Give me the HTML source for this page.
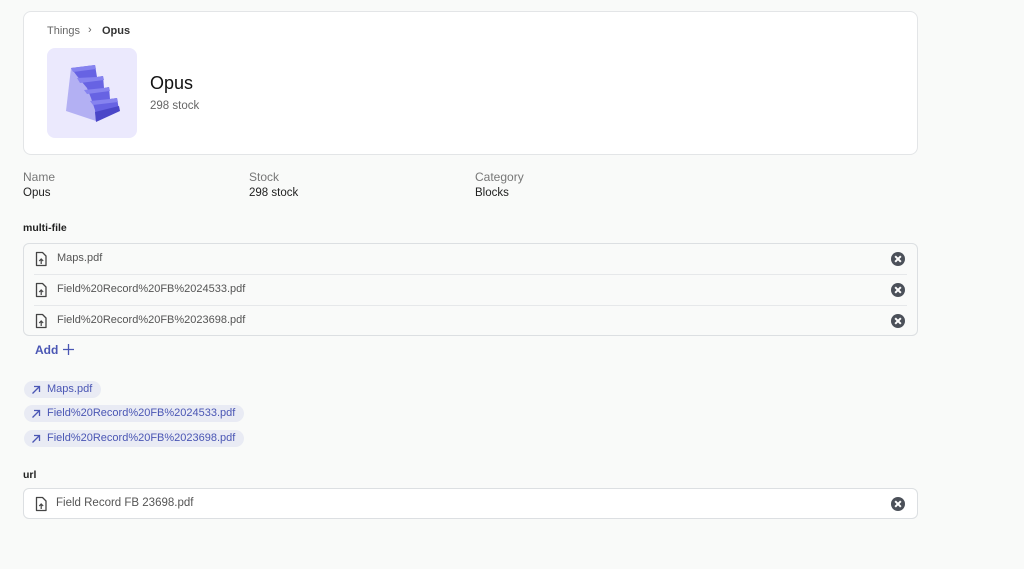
<!DOCTYPE html>
<html><head><style>
*{margin:0;padding:0;box-sizing:border-box}
body{width:1024px;height:569px;background:#f9faf9;font-family:"Liberation Sans",sans-serif;position:relative;overflow:hidden;color:#222}
.a{position:absolute;white-space:nowrap}
.card{position:absolute;left:23px;top:11px;width:895px;height:144px;background:#fff;border:1px solid #e3e5e7;border-radius:8px}
.box{position:absolute;left:23px;width:895px;background:#f9faf9;border:1px solid #dcdfe2;border-radius:6px}
.row{position:absolute;left:10px;right:10px;height:31px}
.row .t{position:absolute;left:23px;top:8px;font-size:11px;color:#555}
.fi{position:absolute;left:0;top:7px}
.x{position:absolute;right:2px;top:8px;width:14px;height:14px;border-radius:50%;background:#4b5059}
.x:before,.x:after{content:"";position:absolute;left:6px;top:3px;width:2px;height:8px;background:#fff;transform:rotate(45deg)}
.x:after{transform:rotate(-45deg)}
.chip{position:absolute;left:24px;height:17px;border-radius:9px;background:#e9ebf4;color:#4a56b4;font-size:11px;padding:2px 9px 0 23px}
.chip svg{position:absolute;left:7px;top:4px}
.lbl{font-size:12px;color:#777}
.val{font-size:11.5px;color:#222}
</style></head><body>
<div class="card">
 <div class="a" style="left:23px;top:13px;font-size:11px;color:#666">Things</div>
 <div class="a" style="left:64px;top:12px;font-size:11px;color:#666">›</div>
 <div class="a" style="left:78px;top:13px;font-size:11px;font-weight:bold;color:#333">Opus</div>
 <div class="a" style="left:23px;top:36px;width:90px;height:90px;border-radius:8px;background:#ebe9fd">
  <svg width="90" height="90" viewBox="0 0 90 90">
   <polygon points="24,20 19,63 49,73 49,30" fill="#b3b0f3"/>
   <polygon points="24,20 48,17 50,29 56,28 57,40 62,39 63,51 70,50 72,62 49,73 48,62 44,50 40,40 30,28" fill="#6763e3"/>
   <polygon points="24,20 48,17 49,21 26,24" fill="#8683ef"/>
   <polygon points="30,30 50,29 56,28 57,32 33,35" fill="#8683ef"/>
   <polygon points="37,42 57,40 62,39 63,43 40,46" fill="#8683ef"/>
   <polygon points="43,53 63,51 70,50 71,54 46,57" fill="#8683ef"/>
   <polygon points="48,64 72,58 73,63 49,74" fill="#4a46c8"/>
  </svg>
 </div>
 <div class="a" style="left:126px;top:61px;font-size:18px;color:#111">Opus</div>
 <div class="a" style="left:126px;top:88px;font-size:11.5px;color:#666">298 stock</div>
</div>
<div class="a lbl" style="left:23px;top:170px">Name</div>
<div class="a val" style="left:23px;top:187px">Opus</div>
<div class="a lbl" style="left:249px;top:170px">Stock</div>
<div class="a val" style="left:249px;top:187px">298 stock</div>
<div class="a lbl" style="left:475px;top:170px">Category</div>
<div class="a val" style="left:475px;top:187px">Blocks</div>
<div class="a" style="left:23px;top:222px;font-size:10.5px;font-weight:bold;color:#222">multi-file</div>

<svg width="0" height="0" style="position:absolute"><defs><g id="f"><path d="M2.5 1.5h6l3.5 3.5v9.5h-9.5z" fill="none" stroke="#444" stroke-width="1.3" stroke-linejoin="round"/><path d="M7.2 13V8M5.2 10l2-2 2 2" fill="none" stroke="#444" stroke-width="1.2"/></g></defs></svg>

<div class="box" style="top:243px;height:93px">
 <div class="row" style="top:0;border-bottom:1px solid #e6e8ea"><svg class="fi" width="14" height="16"><use href="#f"/></svg><span class="t">Maps.pdf</span><span class="x"></span></div>
 <div class="row" style="top:31px;border-bottom:1px solid #e6e8ea"><svg class="fi" width="14" height="16"><use href="#f"/></svg><span class="t">Field%20Record%20FB%2024533.pdf</span><span class="x"></span></div>
 <div class="row" style="top:62px"><svg class="fi" width="14" height="16"><use href="#f"/></svg><span class="t">Field%20Record%20FB%2023698.pdf</span><span class="x"></span></div>
</div>
<div class="a" style="left:35px;top:343px;font-size:12px;font-weight:bold;color:#4a56b4">Add</div>
<svg class="a" style="left:62px;top:343px" width="13" height="13"><path d="M6.5 1v11M1 6.5h11" stroke="#4a56b4" stroke-width="1.3"/></svg>

<div class="chip" style="top:381px">
<svg width="10" height="10"><path d="M1.5 8.5l7-7M3 1.5h5.5V7" fill="none" stroke="#4a56b4" stroke-width="1.3"/></svg>Maps.pdf</div>
<div class="chip" style="top:405px">
<svg width="10" height="10"><path d="M1.5 8.5l7-7M3 1.5h5.5V7" fill="none" stroke="#4a56b4" stroke-width="1.3"/></svg>Field%20Record%20FB%2024533.pdf</div>
<div class="chip" style="top:430px">
<svg width="10" height="10"><path d="M1.5 8.5l7-7M3 1.5h5.5V7" fill="none" stroke="#4a56b4" stroke-width="1.3"/></svg>Field%20Record%20FB%2023698.pdf</div>

<div class="a" style="left:23px;top:469px;font-size:10.5px;font-weight:bold;color:#222">url</div>
<div class="box" style="top:488px;height:31px;background:#fff">
 <div class="row" style="top:0"><svg class="fi" width="14" height="16"><use href="#f"/></svg><span class="t" style="left:22px;font-size:11.5px;top:8px">Field Record FB 23698.pdf</span><span class="x"></span></div>
</div>
</body></html>
